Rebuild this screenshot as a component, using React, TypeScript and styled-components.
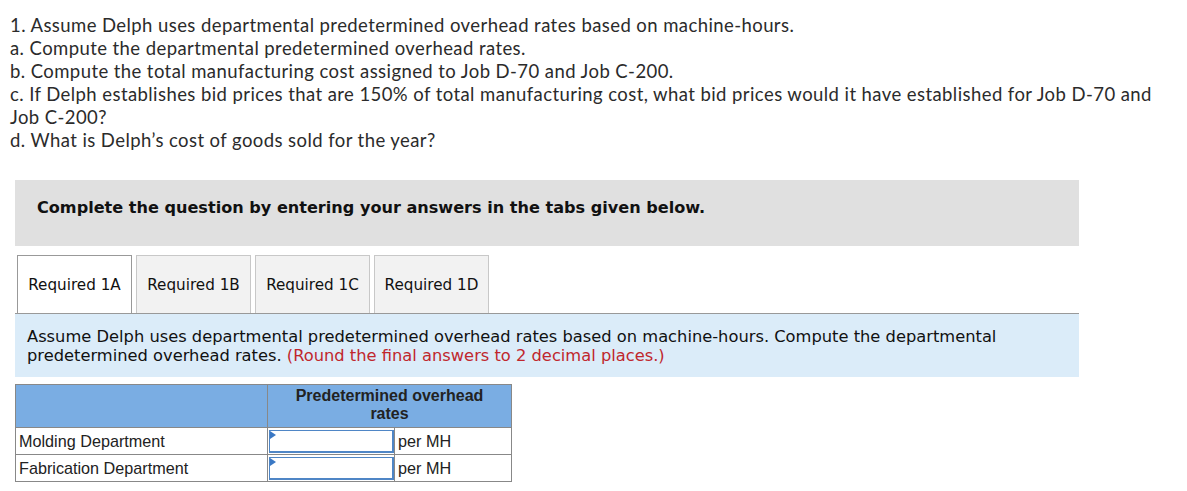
import styled, { createGlobalStyle } from "styled-components";

const GlobalStyle = createGlobalStyle`
  body {
    margin: 0;
    background: #fff;
  }
`;

const Page = styled.div`
  padding: 14px 0 0 10px;
`;

const Question = styled.div`
  font-family: "Lato", "Liberation Sans", sans-serif;
  font-size: 18.5px;
  letter-spacing: 0.42px;
  line-height: 23px;
  color: #2b2b2b;
  width: 1160px;
`;

const Panel = styled.div`
  margin: 28px 0 0 5px;
  width: 1064px;
  font-family: "DejaVu Sans", Verdana, sans-serif;
  color: #111;
`;

const Banner = styled.div`
  height: 54px;
  background: #e0e0e0;
  display: flex;
  align-items: center;
  padding: 0 0 12px 22px;
  font-size: 16.1px;
  font-weight: bold;
`;

const TabRow = styled.div`
  margin-top: 9px;
  display: flex;
  gap: 4px;
  padding-left: 2px;
  border-bottom: 1px solid #999;
`;

const Tab = styled.div<{ $active?: boolean }>`
  height: 57px;
  width: 113px;
  display: flex;
  align-items: center;
  justify-content: center;
  font-size: 15.2px;
  background: ${(p) => (p.$active ? "#fff" : "#f2f2f2")};
  border: 1px solid ${(p) => (p.$active ? "#999" : "#c8c8c8")};
  border-bottom: none;
`;

const Instructions = styled.div`
  background: #dbecf9;
  padding: 13px 12px 11px 12px;
  height: 39px;
  font-size: 16.3px;
  line-height: 19px;
`;

const Hint = styled.span`
  color: #c0272d;
`;

const Table = styled.table`
  margin-top: 7px;
  border-collapse: collapse;
  font-family: "Liberation Sans", Arial, sans-serif;
  font-size: 16.2px;
  color: #222;
  border: 1px solid #888;
`;

const HeadCell = styled.th`
  background: #7aade3;
  height: 40px;
  padding: 2px 0 0;
  font-size: 16px;
  line-height: 18px;
  font-weight: bold;
  text-align: center;
  border: 1px solid #888;
  vertical-align: top;
`;

const LabelCell = styled.td`
  width: 248px;
  height: 26px;
  padding: 0 0 0 3px;
  border: 1px solid #888;
`;

const InputCell = styled.td`
  width: 126px;
  padding: 0;
  border: 1px solid #888;
`;

const UnitCell = styled.td`
  width: 113px;
  padding: 0 0 0 3px;
  border: 1px solid #888;
`;

const AnswerBox = styled.div`
  position: relative;
  height: 23px;
  margin: 1px 0 1px 1px;
  border: 2px solid #4f86c6;
  border-top-width: 1px;
  border-left-width: 1px;
  background: #fff;
  box-sizing: border-box;
`;

const Marker = styled.span`
  position: absolute;
  left: 0;
  top: 0;
  width: 0;
  height: 0;
  border-top: 4px solid transparent;
  border-bottom: 4px solid transparent;
  border-left: 6px solid #3a78c4;
`;

const rows = ["Molding Department", "Fabrication Department"];

export default function App() {
  return (
    <Page>
      <GlobalStyle />
      <Question>
        1. Assume Delph uses departmental predetermined overhead rates based on machine-hours.
        <br />
        a. Compute the departmental predetermined overhead rates.
        <br />
        b. Compute the total manufacturing cost assigned to Job D-70 and Job C-200.
        <br />
        c. If Delph establishes bid prices that are 150% of total manufacturing cost, what bid prices would it have
        established for Job D-70 and Job C-200?
        <br />
        d. What is Delph’s cost of goods sold for the year?
      </Question>
      <Panel>
        <Banner>Complete the question by entering your answers in the tabs given below.</Banner>
        <TabRow>
          <Tab $active>Required 1A</Tab>
          <Tab>Required 1B</Tab>
          <Tab>Required 1C</Tab>
          <Tab>Required 1D</Tab>
        </TabRow>
        <Instructions>
          Assume Delph uses departmental predetermined overhead rates based on machine-hours. Compute the departmental
          predetermined overhead rates. <Hint>(Round the final answers to 2 decimal places.)</Hint>
        </Instructions>
        <Table>
          <thead>
            <tr>
              <HeadCell />
              <HeadCell colSpan={2}>
                Predetermined overhead
                <br />
                rates
              </HeadCell>
            </tr>
          </thead>
          <tbody>
            {rows.map((r) => (
              <tr key={r}>
                <LabelCell>{r}</LabelCell>
                <InputCell>
                  <AnswerBox>
                    <Marker />
                  </AnswerBox>
                </InputCell>
                <UnitCell>per MH</UnitCell>
              </tr>
            ))}
          </tbody>
        </Table>
      </Panel>
    </Page>
  );
}
